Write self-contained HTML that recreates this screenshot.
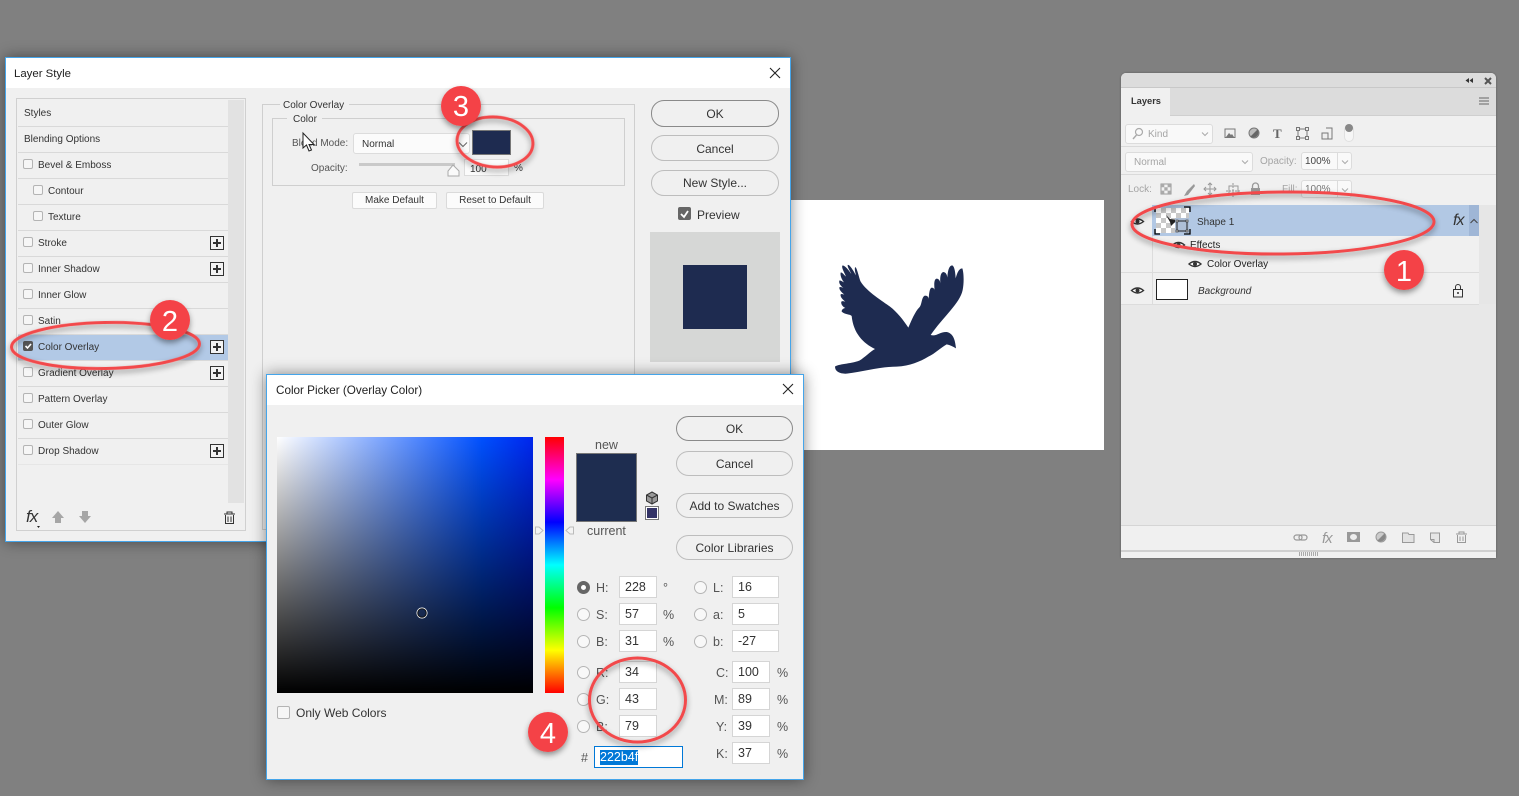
<!DOCTYPE html>
<html><head><meta charset="utf-8"><title>Layer Style</title>
<style>
html,body{margin:0;padding:0;width:1519px;height:796px;overflow:hidden;background:#808080}
body{position:relative;font-family:"Liberation Sans",sans-serif;color:#333}
.a{position:absolute;box-sizing:border-box}
.t{position:absolute;white-space:nowrap;line-height:16px;height:16px;font-size:10px;color:#333}
.dlg{position:absolute;box-sizing:border-box;background:#f0f0f0;border:1px solid #45a5ea;box-shadow:0 0 14px rgba(0,0,0,.45)}
.sep{position:absolute;left:18px;width:210px;height:1px;background:#d9d9d9}
.cb{position:absolute;box-sizing:border-box;width:10px;height:10px;border:1px solid #b4b4b4;border-radius:2px;background:#f6f6f6}
.plus{position:absolute;box-sizing:border-box;left:210px;width:14px;height:14px;border:1px solid #333;background:linear-gradient(#333,#333) center/8px 2px no-repeat,linear-gradient(#333,#333) center/2px 8px no-repeat,#f3f3f3}
.pill{position:absolute;box-sizing:border-box;border:1px solid #bdbdbd;border-radius:13px;background:#f0f0f0;text-align:center;font-size:12px;color:#333}
.pill.d{border-color:#8a8a8a}
.box{position:absolute;box-sizing:border-box;background:#fff;border:1px solid #d5d5d5;font-size:12.5px;line-height:20px;padding-left:5px;color:#333}
.rd{position:absolute;box-sizing:border-box;width:13px;height:13px;border:1px solid #b5b5b5;border-radius:50%;background:#f8f8f8}
.t.p{font-size:12.5px;color:#555;line-height:14px;height:14px}
.btn{position:absolute;box-sizing:border-box;background:#fbfbfb;border:1px solid #dadada;border-radius:2px;text-align:center;font-size:10px;color:#333}
.sel{position:absolute;box-sizing:border-box;background:#f9f9f9;border:1px solid #dcdcdc;border-radius:3px}
.t.g{color:#a5a5a5}
</style></head><body>

<!-- canvas -->
<div class="a" style="left:790px;top:200px;width:314px;height:250px;background:#fff"></div>
<svg class="a" style="left:800px;top:240px" width="180" height="150" viewBox="0 0 540 450"><path fill="#1e2b50" d="M105 380C115 372 150 372 178 362C195 352 210 335 225 327C190 310 160 280 155 228C150 222 135 225 125 215C125 208 130 205 136 204C128 200 122 192 124 185C128 182 132 184 136 185C127 178 120 170 122 163C125 161 129 163 133 164C125 157 117 150 118 142C120 140 126 142 130 144C122 137 116 130 118 122C120 120 126 124 132 127C125 118 120 106 122 98C126 96 131 104 138 110C134 98 124 85 127 77C132 73 146 90 154 102C150 92 142 82 143 75C148 71 160 92 168 106C167 100 163 90 165 82C170 78 176 110 182 125C200 155 250 185 270 200C290 215 310 240 325 263C335 240 345 215 358 202C366 196 364 170 375 167C383 167 386 172 386 178C387 165 388 145 395 143C402 144 404 148 404 153C403 140 400 118 410 116C417 117 420 122 421 130C420 118 420 98 430 96C438 97 441 104 442 113C443 100 445 76 457 76C464 80 466 98 467 115C470 105 475 85 487 85C492 100 492 130 488 150C480 190 430 230 392 285C410 290 420 275 440 276C458 280 465 295 468 325C460 320 450 315 440 313C420 325 405 340 385 350C360 365 330 378 290 380C240 380 190 395 140 401C120 402 105 395 105 380Z"/></svg>

<!-- Layer Style dialog -->
<div class="dlg" style="left:5px;top:57px;width:786px;height:485px"></div>
<div class="a" style="left:6px;top:58px;width:784px;height:30px;background:#fff"></div>
<div class="t" style="left:14px;top:66px;font-size:11.4px;color:#222">Layer Style</div>
<div class="a" style="left:16px;top:98px;width:230px;height:433px;border:1px solid #d0d0d0"></div>
<div class="a" style="left:228px;top:100px;width:16px;height:403px;background:#e2e2e2"></div>
<div class="sep" style="top:126px"></div><div class="sep" style="top:152px"></div><div class="sep" style="top:178px"></div><div class="sep" style="top:204px"></div><div class="sep" style="top:230px"></div><div class="sep" style="top:256px"></div><div class="sep" style="top:282px"></div><div class="sep" style="top:308px"></div><div class="sep" style="top:334px"></div><div class="sep" style="top:360px"></div><div class="sep" style="top:386px"></div><div class="sep" style="top:412px"></div><div class="sep" style="top:438px"></div><div class="sep" style="top:464px;background:#e6e6e6"></div>
<div class="a" style="left:18px;top:335px;width:210px;height:25px;background:#b2c9e6"></div>

<div class="t" style="left:24px;top:106px">Styles</div>
<div class="t" style="left:24px;top:132px">Blending Options</div>
<div class="cb" style="left:23px;top:159px"></div><div class="t" style="left:38px;top:158px">Bevel &amp; Emboss</div>
<div class="cb" style="left:33px;top:185px"></div><div class="t" style="left:48px;top:184px">Contour</div>
<div class="cb" style="left:33px;top:211px"></div><div class="t" style="left:48px;top:210px">Texture</div>
<div class="cb" style="left:23px;top:237px"></div><div class="t" style="left:38px;top:236px">Stroke</div><div class="plus" style="top:236px"></div>
<div class="cb" style="left:23px;top:263px"></div><div class="t" style="left:38px;top:262px">Inner Shadow</div><div class="plus" style="top:262px"></div>
<div class="cb" style="left:23px;top:289px"></div><div class="t" style="left:38px;top:288px">Inner Glow</div>
<div class="cb" style="left:23px;top:315px"></div><div class="t" style="left:38px;top:314px">Satin</div>
<div class="cb" style="left:23px;top:341px;background:#555;border-color:#555"></div><div class="t" style="left:38px;top:340px">Color Overlay</div><div class="plus" style="top:340px"></div>
<div class="cb" style="left:23px;top:367px"></div><div class="t" style="left:38px;top:366px">Gradient Overlay</div><div class="plus" style="top:366px"></div>
<div class="cb" style="left:23px;top:393px"></div><div class="t" style="left:38px;top:392px">Pattern Overlay</div>
<div class="cb" style="left:23px;top:419px"></div><div class="t" style="left:38px;top:418px">Outer Glow</div>
<div class="cb" style="left:23px;top:445px"></div><div class="t" style="left:38px;top:444px">Drop Shadow</div><div class="plus" style="top:444px"></div>
<div class="t" style="left:26px;top:510px;font:italic 17px 'Liberation Sans',sans-serif;line-height:14px;color:#333;letter-spacing:-1px">fx</div>

<!-- fieldsets -->
<div class="a" style="left:262px;top:104px;width:373px;height:426px;border:1px solid #cfcfcf"></div>
<div class="a" style="left:280px;top:100px;width:69px;height:10px;background:#f0f0f0"></div>
<div class="t" style="left:283px;top:98px">Color Overlay</div>
<div class="a" style="left:272px;top:118px;width:353px;height:68px;border:1px solid #cfcfcf"></div>
<div class="a" style="left:287px;top:114px;width:35px;height:9px;background:#f0f0f0"></div>
<div class="t" style="left:293px;top:112px">Color</div>
<div class="t" style="left:292px;top:136px;color:#555">Blend Mode:</div>
<div class="sel" style="left:353px;top:133px;width:117px;height:21px;background:#fbfbfb"></div>
<div class="t" style="left:362px;top:137px">Normal</div>
<div class="a" style="left:472px;top:130px;width:39px;height:25px;background:#1e2b50;border:1px solid #777"></div>
<div class="t" style="left:311px;top:161px;color:#555">Opacity:</div>
<div class="a" style="left:359px;top:163px;width:96px;height:3px;background:#c9c9c9"></div>
<div class="a" style="left:464px;top:159px;width:45px;height:17px;background:#fbfbfb;border:1px solid #dcdcdc"></div>
<div class="t" style="left:470px;top:162px">100</div>
<div class="t" style="left:514px;top:161px">%</div>
<div class="btn" style="left:352px;top:192px;width:85px;height:17px;line-height:16px">Make Default</div>
<div class="btn" style="left:446px;top:192px;width:98px;height:17px;line-height:16px">Reset to Default</div>

<div class="pill d" style="left:651px;top:100px;width:128px;height:27px;line-height:26px">OK</div>
<div class="pill" style="left:651px;top:135px;width:128px;height:26px;line-height:26px">Cancel</div>
<div class="pill" style="left:651px;top:170px;width:128px;height:26px;line-height:25px">New Style...</div>
<div class="cb" style="left:678px;top:207px;width:13px;height:13px;background:#666;border-color:#666"></div>
<div class="t" style="left:697px;top:207px;font-size:12px">Preview</div>
<div class="a" style="left:650px;top:232px;width:130px;height:130px;background:#d6d7d6"></div>
<div class="a" style="left:683px;top:265px;width:64px;height:64px;background:#1e2b50"></div>

<!-- Color Picker -->
<div class="dlg" style="left:266px;top:374px;width:538px;height:406px"></div>
<div class="a" style="left:267px;top:375px;width:536px;height:30px;background:#fff"></div>
<div class="t" style="left:276px;top:383px;font-size:11.7px;color:#222">Color Picker (Overlay Color)</div>
<div class="a" style="left:277px;top:437px;width:256px;height:256px;background:linear-gradient(to top,#000,rgba(0,0,0,0)),linear-gradient(to right,#fff,#0050ff 80%,#0026ee)"></div>
<div class="a" style="left:545px;top:437px;width:19px;height:256px;background:linear-gradient(#f00,#f0f 16.7%,#00f 33.3%,#0ff 50%,#0f0 66.7%,#ff0 83.3%,#f00)"></div>
<div class="t p" style="left:595px;top:438px">new</div>
<div class="a" style="left:576px;top:453px;width:61px;height:69px;background:#1e2d50;border:1px solid #777"></div>
<div class="t p" style="left:587px;top:524px">current</div>
<div class="a" style="left:645px;top:506px;width:14px;height:14px;background:#333366;border:1px solid #777;box-shadow:inset 0 0 0 1px #fff"></div>

<div class="pill d" style="left:676px;top:416px;width:117px;height:25px;line-height:24px">OK</div>
<div class="pill" style="left:676px;top:451px;width:117px;height:25px;line-height:24px">Cancel</div>
<div class="pill" style="left:676px;top:493px;width:117px;height:25px;line-height:24px">Add to Swatches</div>
<div class="pill" style="left:676px;top:535px;width:117px;height:25px;line-height:24px">Color Libraries</div>

<div class="cb" style="left:277px;top:706px;width:13px;height:13px"></div>
<div class="t" style="left:296px;top:705px;font-size:12px">Only Web Colors</div>

<div class="rd" style="left:577px;top:581px;background:#fff;border:4px solid #666"></div>
<div class="rd" style="left:577px;top:608px"></div>
<div class="rd" style="left:577px;top:635px"></div>
<div class="rd" style="left:577px;top:666px"></div>
<div class="rd" style="left:577px;top:693px"></div>
<div class="rd" style="left:577px;top:720px"></div>
<div class="rd" style="left:694px;top:581px"></div>
<div class="rd" style="left:694px;top:608px"></div>
<div class="rd" style="left:694px;top:635px"></div>

<div class="t p" style="left:596px;top:581px">H:</div>
<div class="t p" style="left:596px;top:608px">S:</div>
<div class="t p" style="left:596px;top:635px">B:</div>
<div class="t p" style="left:596px;top:666px">R:</div>
<div class="t p" style="left:596px;top:693px">G:</div>
<div class="t p" style="left:596px;top:720px">B:</div>
<div class="t p" style="left:713px;top:581px">L:</div>
<div class="t p" style="left:713px;top:608px">a:</div>
<div class="t p" style="left:713px;top:635px">b:</div>
<div class="t p" style="left:716px;top:666px">C:</div>
<div class="t p" style="left:714px;top:693px">M:</div>
<div class="t p" style="left:716px;top:720px">Y:</div>
<div class="t p" style="left:716px;top:747px">K:</div>

<div class="box" style="left:619px;top:576px;width:38px;height:22px">228</div>
<div class="box" style="left:619px;top:603px;width:38px;height:22px">57</div>
<div class="box" style="left:619px;top:630px;width:38px;height:22px">31</div>
<div class="box" style="left:619px;top:661px;width:38px;height:22px">34</div>
<div class="box" style="left:619px;top:688px;width:38px;height:22px">43</div>
<div class="box" style="left:619px;top:715px;width:38px;height:22px">79</div>
<div class="box" style="left:732px;top:576px;width:47px;height:22px">16</div>
<div class="box" style="left:732px;top:603px;width:47px;height:22px">5</div>
<div class="box" style="left:732px;top:630px;width:47px;height:22px">-27</div>
<div class="box" style="left:732px;top:661px;width:38px;height:22px">100</div>
<div class="box" style="left:732px;top:688px;width:38px;height:22px">89</div>
<div class="box" style="left:732px;top:715px;width:38px;height:22px">39</div>
<div class="box" style="left:732px;top:742px;width:38px;height:22px">37</div>
<div class="t p" style="left:663px;top:581px">°</div>
<div class="t p" style="left:663px;top:608px">%</div>
<div class="t p" style="left:663px;top:635px">%</div>
<div class="t p" style="left:777px;top:666px">%</div>
<div class="t p" style="left:777px;top:693px">%</div>
<div class="t p" style="left:777px;top:720px">%</div>
<div class="t p" style="left:777px;top:747px">%</div>
<div class="t p" style="left:581px;top:751px">#</div>
<div class="a" style="left:594px;top:746px;width:89px;height:22px;background:#fff;border:1px solid #0078d7"></div>
<div class="t" style="left:600px;top:750px;height:15px;line-height:15px;background:#0078d7;color:#fff;font-size:12.5px">222b4f</div>

<!-- Layers panel -->
<div class="a" style="left:1121px;top:73px;width:375px;height:485px;background:#f0f0f0;border-radius:5px 5px 0 0;box-shadow:0 0 2px rgba(0,0,0,.3)"></div>
<div class="a" style="left:1121px;top:73px;width:375px;height:42px;background:#dcdcdc;border-radius:5px 5px 0 0"></div>
<div class="a" style="left:1121px;top:87px;width:375px;height:1px;background:#c8c8c8"></div>
<div class="a" style="left:1121px;top:115px;width:375px;height:1px;background:#cfcfcf"></div>
<div class="a" style="left:1121px;top:88px;width:49px;height:28px;background:#f0f0f0"></div>
<div class="t" style="left:1131px;top:93px;font-weight:bold;font-size:9.3px;color:#333">Layers</div>
<div class="a" style="left:1121px;top:146px;width:375px;height:1px;background:#dadada"></div>
<div class="a" style="left:1121px;top:174px;width:375px;height:1px;background:#dadada"></div>

<div class="sel" style="left:1125px;top:124px;width:88px;height:20px"></div>
<div class="t g" style="left:1148px;top:127px">Kind</div>
<div class="sel" style="left:1125px;top:152px;width:128px;height:20px"></div>
<div class="t g" style="left:1134px;top:155px">Normal</div>
<div class="t g" style="left:1260px;top:154px">Opacity:</div>
<div class="sel" style="left:1301px;top:152px;width:51px;height:18px"></div>
<div class="a" style="left:1337px;top:152px;width:1px;height:18px;background:#dcdcdc"></div>
<div class="t" style="left:1305px;top:154px;color:#444">100%</div>
<div class="t g" style="left:1128px;top:182px">Lock:</div>
<div class="t g" style="left:1282px;top:182px">Fill:</div>
<div class="sel" style="left:1301px;top:180px;width:51px;height:18px"></div>
<div class="a" style="left:1337px;top:180px;width:1px;height:18px;background:#dcdcdc"></div>
<div class="t" style="left:1305px;top:182px;color:#777">100%</div>
<div class="a" style="left:1344px;top:125px;width:10px;height:17px;border:1px solid #e0e0e0;border-radius:5px;background:#f6f6f6"></div>

<div class="a" style="left:1479px;top:205px;width:17px;height:320px;background:#e6e6e6"></div>
<div class="a" style="left:1121px;top:304px;width:375px;height:221px;background:#e8e8e8"></div>
<div class="a" style="left:1152px;top:205px;width:317px;height:31px;background:#b2c8e4"></div>
<div class="a" style="left:1469px;top:205px;width:10px;height:31px;background:#9fb6d6"></div>
<div class="a" style="left:1121px;top:272px;width:358px;height:1px;background:#dcdcdc"></div>
<div class="a" style="left:1121px;top:304px;width:358px;height:1px;background:#dcdcdc"></div>
<div class="a" style="left:1152px;top:236px;width:1px;height:68px;background:#dcdcdc"></div>
<div class="a" style="left:1156px;top:208px;width:33px;height:25px;background:repeating-conic-gradient(#c8c8c8 0 25%,#fff 0 50%) 0 0/10px 10px"></div>
<div class="a" style="left:1156px;top:279px;width:32px;height:21px;background:#fff;border:1px solid #222"></div>
<div class="t" style="left:1197px;top:215px;color:#333">Shape 1</div>
<div class="t" style="left:1190px;top:238px;color:#222">Effects</div>
<div class="t" style="left:1207px;top:257px;color:#222">Color Overlay</div>
<div class="t" style="left:1198px;top:284px;font-style:italic;color:#333">Background</div>
<div class="t" style="left:1453px;top:214px;font:italic 16px 'Liberation Sans',sans-serif;line-height:14px;color:#333;letter-spacing:-1px">fx</div>
<div class="a" style="left:1121px;top:525px;width:375px;height:1px;background:#d5d5d5"></div>
<div class="a" style="left:1121px;top:550px;width:375px;height:2px;background:#cfcfcf"></div>
<div class="a" style="left:1299px;top:552px;width:19px;height:4px;background:repeating-linear-gradient(to right,#aaa 0 1px,transparent 1px 2px)"></div>

<!-- icons and annotations -->
<svg class="a" style="left:0;top:0" width="1519" height="796" viewBox="0 0 1519 796">
<defs>
<filter id="s" x="-20%" y="-30%" width="140%" height="170%"><feDropShadow dx="0" dy="3" stdDeviation="3" flood-color="#000" flood-opacity=".4"/></filter>
<g id="eye"><path d="M-6 0Q0-5 6 0Q0 5-6 0Z" fill="#fff" stroke="#333" stroke-width="1.4"/><circle r="2" fill="#333"/></g>
<g id="chev"><path d="M-3-1.5L0 1.5L3-1.5" fill="none" stroke="#aaa" stroke-width="1"/></g>
</defs>
<!-- dialog close buttons -->
<path d="M770 68L780 78M780 68L770 78" stroke="#222" stroke-width="1.1"/>
<path d="M783 384L793 394M793 384L783 394" stroke="#222" stroke-width="1.1"/>
<!-- checks -->
<path d="M25.5 346L27.5 348L31 344" fill="none" stroke="#fff" stroke-width="1.6"/>
<path d="M681 214L684 217L688 211" fill="none" stroke="#fff" stroke-width="1.8"/>
<!-- select chevron -->
<path d="M459 142.500L463 146.500L467 142.500" fill="none" stroke="#666" stroke-width="1"/>
<!-- slider thumb -->
<path d="M448 176V171L453 165L459 171V176Z" fill="#fafafa" stroke="#aaa"/>
<!-- cursor -->
<path d="M303 133V148L306.500 145L309 151L311.500 150L309 144.500L314 144.500Z" fill="#fff" stroke="#222" stroke-width="1"/>
<!-- layer style footer icons -->
<path d="M37 526h3l-1.500 2Z" fill="#222"/>
<path d="M58 511L64 518H61V523H55V518H52Z" fill="#a6a6a6"/>
<path d="M85 523L91 516H88V511H82V516H79Z" fill="#a6a6a6"/>
<path d="M224 514H235M227 514V512H232V514M225.500 515V523.500H233.500V515M228 516.500V522M231 516.500V522" fill="none" stroke="#333" stroke-width="1"/>
<!-- picker marker, hue arrows, gamut -->
<circle cx="422" cy="613" r="5" fill="none" stroke="#fff" stroke-width="1"/><circle cx="422" cy="613" r="4.300" fill="none" stroke="#111" stroke-width="1"/>
<path d="M535.500 527H539L543 530.500L539 534H535.500Z" fill="#f3f3f3" stroke="#bbb"/>
<path d="M573.500 527H570L566 530.500L570 534H573.500Z" fill="#f3f3f3" stroke="#bbb"/>
<path d="M652 492L657.500 495V501L652 504L646.500 501V495Z" fill="#999" stroke="#333"/><path d="M646.500 495L652 498L657.500 495M652 498V504" fill="none" stroke="#333"/>
<!-- layers panel header -->
<path d="M1469 78L1465.500 80.500L1469 83ZM1473 78L1469.500 80.500L1473 83Z" fill="#333"/>
<path d="M1485 78L1491 84M1491 78L1485 84" stroke="#555" stroke-width="2"/>
<path d="M1479 98H1489M1479 101H1489M1479 104H1489" stroke="#666" stroke-width="1"/>
<!-- kind row -->
<circle cx="1139" cy="132" r="3.500" fill="none" stroke="#aaa" stroke-width="1.200"/><path d="M1136.500 135L1133 139" stroke="#aaa" stroke-width="1.400"/>
<use href="#chev" x="1205" y="134"/><use href="#chev" x="1245" y="162"/><use href="#chev" x="1345" y="162"/><use href="#chev" x="1345" y="190"/>
<rect x="1225" y="129" width="10" height="8.500" fill="none" stroke="#777"/><path d="M1226 137L1229 133L1231 135L1232 134L1234 137Z" fill="#777"/>
<circle cx="1254" cy="133" r="5" fill="#bbb" stroke="#777"/><path d="M1257.500 129.500A5 5 0 0 1 1250.500 136.500Z" fill="#666"/>
<text x="1273" y="138" font-family="Liberation Serif,serif" font-weight="bold" font-size="13" fill="#666">T</text>
<rect x="1298" y="129" width="9" height="9" fill="none" stroke="#777"/><path d="M1296.500 127.500h3v3h-3zM1305.500 127.500h3v3h-3zM1296.500 136.500h3v3h-3zM1305.500 136.500h3v3h-3z" fill="#eee" stroke="#777"/>
<path d="M1326 128H1332V139H1323V133" fill="none" stroke="#777"/><rect x="1322" y="133" width="6" height="6" fill="#eee" stroke="#777"/>
<circle cx="1349" cy="128" r="4" fill="#888"/>
<!-- lock row -->
<rect x="1161" y="184" width="10" height="10" fill="#f2f2f2" stroke="#999"/><path d="M1161 184h3.300v3.300h-3.300zM1167.600 184h3.300v3.300h-3.300zM1164.300 187.300h3.300v3.300h-3.300zM1161 190.600h3.300v3.300h-3.300zM1167.600 190.600h3.300v3.300h-3.300z" fill="#aaa"/>
<path d="M1194 184L1187 191L1184 196L1188 195L1195 186Z" fill="#999"/>
<path d="M1210 183V195M1204 189H1216" stroke="#999"/><path d="M1208 185L1210 183L1212 185M1208 193L1210 195L1212 193M1206 187L1204 189L1206 191M1214 187L1216 189L1214 191" fill="none" stroke="#999"/>
<rect x="1229" y="186" width="9" height="8" fill="none" stroke="#999"/><path d="M1226 191H1241M1233 183V198" stroke="#999" stroke-dasharray="2 1"/>
<rect x="1251" y="188" width="9" height="7" fill="#999"/><path d="M1252.500 188V186A3 3 0 0 1 1258.500 186V188" fill="none" stroke="#999" stroke-width="1.300"/>
<!-- layer rows -->
<use href="#eye" x="1137.500" y="221.500"/><use href="#eye" x="1137.500" y="290.500"/>
<use href="#eye" x="1178.500" y="245"/><use href="#eye" x="1195" y="264"/>
<path d="M1470.500 223L1474 219.500L1477.500 223" fill="none" stroke="#444"/>
<!-- thumb -->
<path d="M1155 212V207H1160M1184 207H1190V212M1155 229V234H1160M1184 234H1190V229" fill="none" stroke="#000" stroke-width="1.300"/>
<path d="M1166 215L1170 219L1177 220L1171 226L1170 222Z" fill="#222"/>
<rect x="1175" y="218" width="14" height="15" fill="#aebfd6"/>
<rect x="1177" y="221" width="10" height="10" fill="none" stroke="#222"/>
<path d="M1176 220h2v2h-2zM1186 220h2v2h-2zM1176 230h2v2h-2zM1186 230h2v2h-2z" fill="#ddd" stroke="#222" stroke-width=".6"/>
<!-- bg lock -->
<rect x="1453.500" y="289.500" width="9" height="7.500" fill="#f3f3f3" stroke="#333"/><path d="M1455.500 289.500V287A2.500 2.500 0 0 1 1460.500 287V289.500" fill="none" stroke="#333"/><circle cx="1458" cy="293" r="1" fill="#333"/>
<!-- panel footer -->
<rect x="1294" y="535" width="8" height="5" rx="2.500" fill="none" stroke="#999" stroke-width="1.200"/><rect x="1299" y="535" width="8" height="5" rx="2.500" fill="none" stroke="#999" stroke-width="1.200"/>
<text x="1322" y="543" font-family="Liberation Sans,sans-serif" font-style="italic" font-size="15" letter-spacing="-1" fill="#999">fx</text>
<rect x="1347" y="532" width="13" height="10" fill="#999"/><ellipse cx="1353.500" cy="537" rx="3.500" ry="3" fill="#eee"/>
<circle cx="1381" cy="537" r="5" fill="#ccc" stroke="#999"/><path d="M1384.500 533.500A5 5 0 0 1 1377.500 540.500Z" fill="#888"/>
<path d="M1402.500 533H1408L1409 534.500H1414V542.500H1402.500Z" fill="#e2e2e2" stroke="#999"/>
<path d="M1430.500 533H1439.500V542.500H1434L1430.500 539.500Z" fill="#e6e6e6" stroke="#999"/><path d="M1430.500 539.500H1434V542.500" fill="none" stroke="#999"/>
<path d="M1456 534H1467M1459 534V532H1464V534M1457.500 535V542.500H1465.500V535M1460 536.500V541M1463 536.500V541" fill="none" stroke="#999"/>
<!-- annotations -->
<g fill="none" stroke="#f24a4c" stroke-width="3" filter="url(#s)">
<ellipse cx="1283" cy="223" rx="151" ry="31" transform="rotate(-.5 1283 223)"/>
<ellipse cx="105.500" cy="345.500" rx="94" ry="23" transform="rotate(-1 105 346)"/>
<ellipse cx="495" cy="142" rx="38" ry="25" transform="rotate(4 495 142)"/>
<ellipse cx="637.500" cy="700" rx="48" ry="42"/>
</g>
<g filter="url(#s)" fill="#f44347">
<circle cx="1404" cy="270" r="20"/><circle cx="170" cy="320" r="20"/><circle cx="461" cy="106" r="20"/><circle cx="548" cy="732" r="20"/>
</g>
<g font-family="Liberation Sans,sans-serif" font-size="29" fill="#fff" text-anchor="middle">
<text x="1404" y="281">1</text><text x="170" y="331">2</text><text x="461" y="116">3</text><text x="548" y="743">4</text>
</g>
</svg>
</body></html>
